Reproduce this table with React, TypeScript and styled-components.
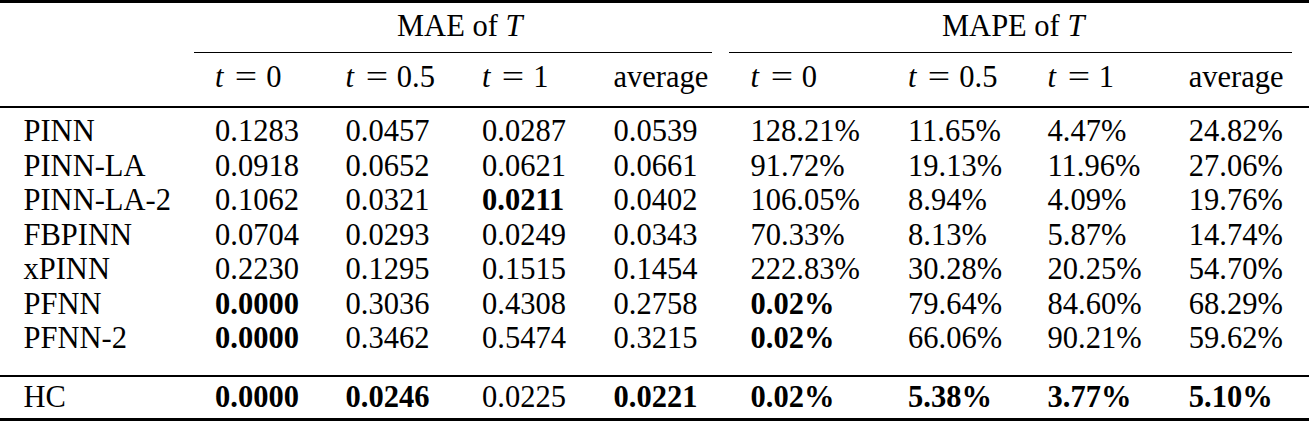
import React from 'react';
import styled, { createGlobalStyle } from 'styled-components';

const Global = createGlobalStyle`
  html, body { margin: 0; padding: 0; background: #ffffff; }
  body {
    font-family: "Liberation Serif", "Times New Roman", serif;
    color: #000000;
  }
`;

const COLS = '215px 130.5px 136.5px 131.5px 137px 157.5px 139.5px 141.3px 1fr';

const Table = styled.div`
  width: 1309px;
  display: flex;
  flex-direction: column;
  font-family: "Liberation Serif", "Times New Roman", serif;
  font-size: 30.5px;
  line-height: 34.5px;
`;

const Rule = styled.div<{ $h: number; $mt: number }>`
  height: ${(p) => p.$h}px;
  margin-top: ${(p) => p.$mt}px;
  background: #000000;
`;

const Row = styled.div<{ $mt?: number }>`
  display: grid;
  grid-template-columns: ${COLS};
  height: 34.5px;
  margin-top: ${(p) => p.$mt ?? 0}px;
  white-space: nowrap;
`;

const Cell = styled.div<{ $bold?: boolean }>`
  font-weight: ${(p) => (p.$bold ? 700 : 400)};
`;

const Label = styled.div`
  padding-left: 23.5px;
`;

const GroupCell = styled.div<{ $from: number; $to: number; $shift: number }>`
  grid-column: ${(p) => p.$from} / ${(p) => p.$to};
  text-align: center;
  padding-right: ${(p) => p.$shift}px;
`;

const CmidRow = styled.div`
  display: flex;
  gap: 17.6px;
  padding-left: 193.6px;
  margin-top: 8.05px;
`;

const Cmid = styled.div<{ $w: number }>`
  width: ${(p) => p.$w}px;
  height: 1.5px;
  background: #000000;
`;

const Var = styled.i`
  font-style: italic;
  padding-right: 0.07em;
`;

const Op = styled.span`
  display: inline-block;
  width: 0.778em;
  margin: 0 0.278em;
  text-align: center;
  transform: scaleX(1.3);
`;

const TEq = ({ v }: { v: string }) => (
  <>
    <Var>t</Var>
    <Op>=</Op>
    {v}
  </>
);

type RowData = { name: string; vals: string[] };

const rows: RowData[] = [
  { name: 'PINN', vals: ['0.1283', '0.0457', '0.0287', '0.0539', '128.21%', '11.65%', '4.47%', '24.82%'] },
  { name: 'PINN-LA', vals: ['0.0918', '0.0652', '0.0621', '0.0661', '91.72%', '19.13%', '11.96%', '27.06%'] },
  { name: 'PINN-LA-2', vals: ['0.1062', '0.0321', '*0.0211', '0.0402', '106.05%', '8.94%', '4.09%', '19.76%'] },
  { name: 'FBPINN', vals: ['0.0704', '0.0293', '0.0249', '0.0343', '70.33%', '8.13%', '5.87%', '14.74%'] },
  { name: 'xPINN', vals: ['0.2230', '0.1295', '0.1515', '0.1454', '222.83%', '30.28%', '20.25%', '54.70%'] },
  { name: 'PFNN', vals: ['*0.0000', '0.3036', '0.4308', '0.2758', '*0.02%', '79.64%', '84.60%', '68.29%'] },
  { name: 'PFNN-2', vals: ['*0.0000', '0.3462', '0.5474', '0.3215', '*0.02%', '66.06%', '90.21%', '59.62%'] },
];

const hc: RowData = {
  name: 'HC',
  vals: ['*0.0000', '*0.0246', '0.0225', '*0.0221', '*0.02%', '*5.38%', '*3.77%', '*5.10%'],
};

const DataRow = ({ d, mt }: { d: RowData; mt?: number }) => (
  <Row $mt={mt}>
    <Label>{d.name}</Label>
    {d.vals.map((v, i) => {
      const bold = v.startsWith('*');
      return (
        <Cell key={i} $bold={bold}>
          {bold ? v.slice(1) : v}
        </Cell>
      );
    })}
  </Row>
);

export default function App() {
  return (
    <>
      <Global />
      <Table>
        <Rule $h={3} $mt={0} />
        <Row $mt={6.45}>
          <Label />
          <GroupCell $from={2} $to={6} $shift={44}>
            MAE of <Var>T</Var>
          </GroupCell>
          <GroupCell $from={6} $to={10} $shift={31}>
            MAPE of <Var>T</Var>
          </GroupCell>
        </Row>
        <CmidRow>
          <Cmid $w={518.1} />
          <Cmid $w={562.4} />
        </CmidRow>
        <Row $mt={6.95}>
          <Label />
          <Cell><TEq v="0" /></Cell>
          <Cell><TEq v="0.5" /></Cell>
          <Cell><TEq v="1" /></Cell>
          <Cell>average</Cell>
          <Cell><TEq v="0" /></Cell>
          <Cell><TEq v="0.5" /></Cell>
          <Cell><TEq v="1" /></Cell>
          <Cell>average</Cell>
        </Row>
        <Rule $h={2} $mt={11.05} />
        {rows.map((d, i) => (
          <DataRow key={d.name} d={d} mt={i === 0 ? 6.15 : 0} />
        ))}
        <Rule $h={2} $mt={19.35} />
        <DataRow d={hc} mt={2.75} />
        <Rule $h={3} $mt={4.25} />
      </Table>
    </>
  );
}
